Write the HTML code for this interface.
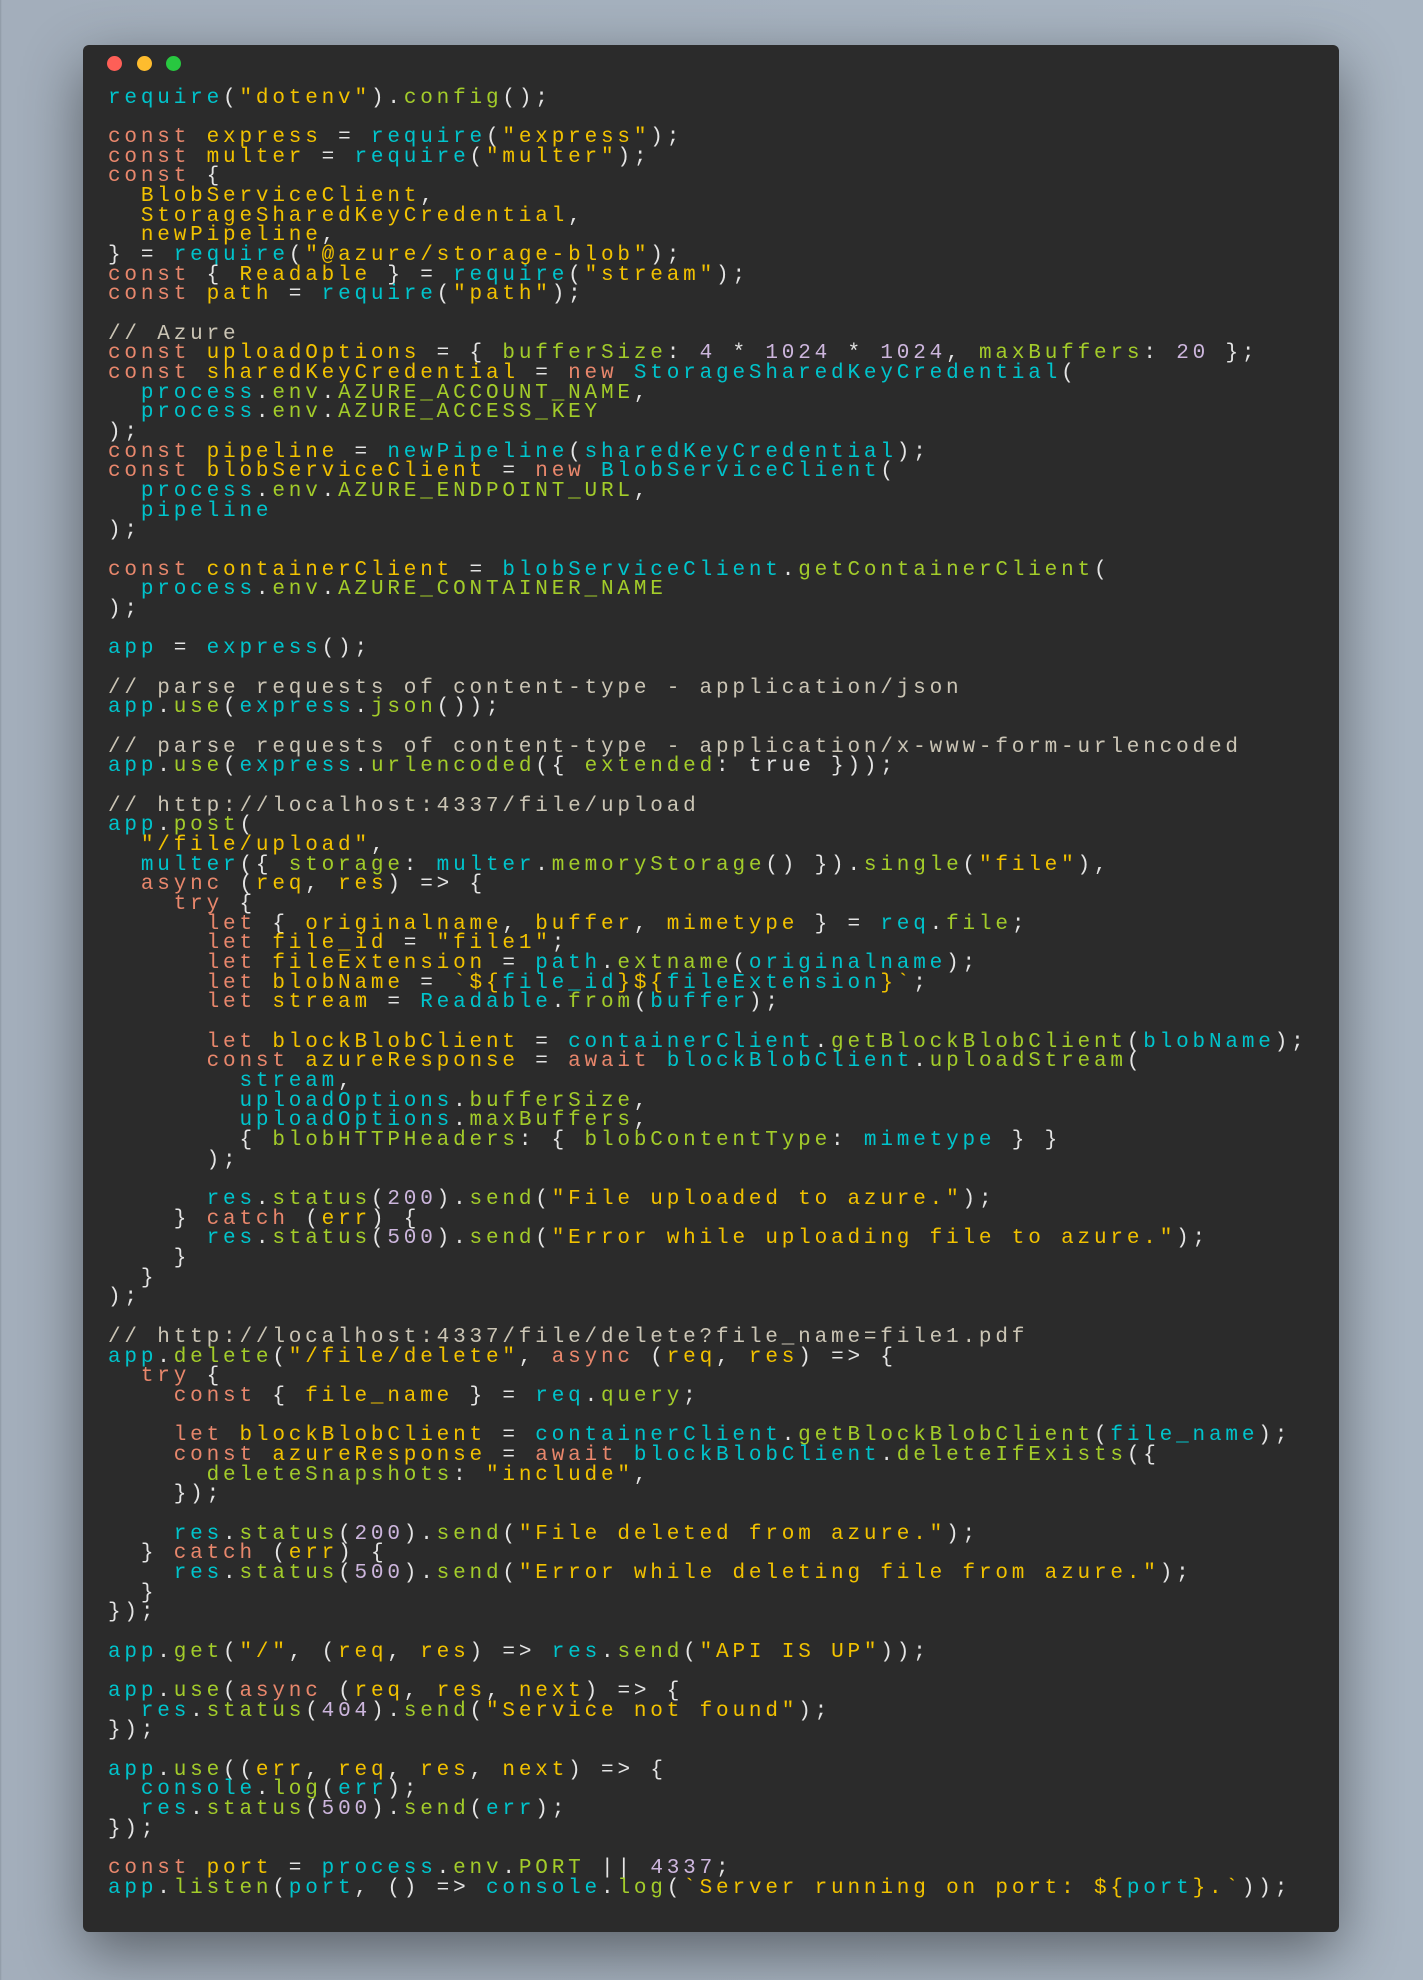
<!DOCTYPE html>
<html><head><meta charset="utf-8"><style>
html,body{margin:0;padding:0;width:1423px;height:1980px;overflow:hidden;background:linear-gradient(90deg,#8e99a4 0px,#a3aebb 2px,#a6b2bf 60%,#a9b5c2 100%);}
.win{position:absolute;left:83px;top:45px;width:1256px;height:1887px;background:#2b2b2b;border-radius:6px;box-shadow:0 20px 60px rgba(0,0,0,.45);}
.d{position:absolute;top:56px;width:15px;height:15px;border-radius:50%;}
pre{position:absolute;left:108px;top:88.5px;margin:0;font-family:"Liberation Mono","DejaVu Sans Mono",monospace;font-size:21px;line-height:19.67px;letter-spacing:3.83px;color:#e4e4e4;}
.k{color:#e8876c}.v{color:#f2c200}.f{color:#00c4cc}.g{color:#a3cc2a}.c{color:#cbc5b5}.n{color:#cdb6dd}
</style></head><body>
<div class="win"></div>
<div class="d" style="left:107px;background:#fe5f57"></div>
<div class="d" style="left:137px;background:#febc2e"></div>
<div class="d" style="left:166px;background:#28c840"></div>
<pre><span class="f">require</span>(<span class="v">"dotenv"</span>).<span class="g">config</span>();

<span class="k">const</span> <span class="v">express</span> = <span class="f">require</span>(<span class="v">"express"</span>);
<span class="k">const</span> <span class="v">multer</span> = <span class="f">require</span>(<span class="v">"multer"</span>);
<span class="k">const</span> {
  <span class="v">BlobServiceClient</span>,
  <span class="v">StorageSharedKeyCredential</span>,
  <span class="v">newPipeline</span>,
} = <span class="f">require</span>(<span class="v">"@azure/storage-blob"</span>);
<span class="k">const</span> { <span class="v">Readable</span> } = <span class="f">require</span>(<span class="v">"stream"</span>);
<span class="k">const</span> <span class="v">path</span> = <span class="f">require</span>(<span class="v">"path"</span>);

<span class="c">// Azure</span>
<span class="k">const</span> <span class="v">uploadOptions</span> = { <span class="g">bufferSize</span>: <span class="n">4</span> * <span class="n">1024</span> * <span class="n">1024</span>, <span class="g">maxBuffers</span>: <span class="n">20</span> };
<span class="k">const</span> <span class="v">sharedKeyCredential</span> = <span class="k">new</span> <span class="f">StorageSharedKeyCredential</span>(
  <span class="f">process</span>.<span class="g">env</span>.<span class="g">AZURE_ACCOUNT_NAME</span>,
  <span class="f">process</span>.<span class="g">env</span>.<span class="g">AZURE_ACCESS_KEY</span>
);
<span class="k">const</span> <span class="v">pipeline</span> = <span class="f">newPipeline</span>(<span class="f">sharedKeyCredential</span>);
<span class="k">const</span> <span class="v">blobServiceClient</span> = <span class="k">new</span> <span class="f">BlobServiceClient</span>(
  <span class="f">process</span>.<span class="g">env</span>.<span class="g">AZURE_ENDPOINT_URL</span>,
  <span class="f">pipeline</span>
);

<span class="k">const</span> <span class="v">containerClient</span> = <span class="f">blobServiceClient</span>.<span class="g">getContainerClient</span>(
  <span class="f">process</span>.<span class="g">env</span>.<span class="g">AZURE_CONTAINER_NAME</span>
);

<span class="f">app</span> = <span class="f">express</span>();

<span class="c">// parse requests of content-type - application/json</span>
<span class="f">app</span>.<span class="g">use</span>(<span class="f">express</span>.<span class="g">json</span>());

<span class="c">// parse requests of content-type - application/x-www-form-urlencoded</span>
<span class="f">app</span>.<span class="g">use</span>(<span class="f">express</span>.<span class="g">urlencoded</span>({ <span class="g">extended</span>: true }));

<span class="c">// http://localhost:4337/file/upload</span>
<span class="f">app</span>.<span class="g">post</span>(
  <span class="v">"/file/upload"</span>,
  <span class="f">multer</span>({ <span class="g">storage</span>: <span class="f">multer</span>.<span class="g">memoryStorage</span>() }).<span class="g">single</span>(<span class="v">"file"</span>),
  <span class="k">async</span> (<span class="v">req</span>, <span class="v">res</span>) =&gt; {
    <span class="k">try</span> {
      <span class="k">let</span> { <span class="v">originalname</span>, <span class="v">buffer</span>, <span class="v">mimetype</span> } = <span class="f">req</span>.<span class="g">file</span>;
      <span class="k">let</span> <span class="v">file_id</span> = <span class="v">"file1"</span>;
      <span class="k">let</span> <span class="v">fileExtension</span> = <span class="f">path</span>.<span class="g">extname</span>(<span class="f">originalname</span>);
      <span class="k">let</span> <span class="v">blobName</span> = <span class="v">`${</span><span class="f">file_id</span><span class="v">}${</span><span class="f">fileExtension</span><span class="v">}`</span>;
      <span class="k">let</span> <span class="v">stream</span> = <span class="f">Readable</span>.<span class="g">from</span>(<span class="f">buffer</span>);

      <span class="k">let</span> <span class="v">blockBlobClient</span> = <span class="f">containerClient</span>.<span class="g">getBlockBlobClient</span>(<span class="f">blobName</span>);
      <span class="k">const</span> <span class="v">azureResponse</span> = <span class="k">await</span> <span class="f">blockBlobClient</span>.<span class="g">uploadStream</span>(
        <span class="f">stream</span>,
        <span class="f">uploadOptions</span>.<span class="g">bufferSize</span>,
        <span class="f">uploadOptions</span>.<span class="g">maxBuffers</span>,
        { <span class="g">blobHTTPHeaders</span>: { <span class="g">blobContentType</span>: <span class="f">mimetype</span> } }
      );

      <span class="f">res</span>.<span class="g">status</span>(<span class="n">200</span>).<span class="g">send</span>(<span class="v">"File uploaded to azure."</span>);
    } <span class="k">catch</span> (<span class="v">err</span>) {
      <span class="f">res</span>.<span class="g">status</span>(<span class="n">500</span>).<span class="g">send</span>(<span class="v">"Error while uploading file to azure."</span>);
    }
  }
);

<span class="c">// http://localhost:4337/file/delete?file_name=file1.pdf</span>
<span class="f">app</span>.<span class="g">delete</span>(<span class="v">"/file/delete"</span>, <span class="k">async</span> (<span class="v">req</span>, <span class="v">res</span>) =&gt; {
  <span class="k">try</span> {
    <span class="k">const</span> { <span class="v">file_name</span> } = <span class="f">req</span>.<span class="g">query</span>;

    <span class="k">let</span> <span class="v">blockBlobClient</span> = <span class="f">containerClient</span>.<span class="g">getBlockBlobClient</span>(<span class="f">file_name</span>);
    <span class="k">const</span> <span class="v">azureResponse</span> = <span class="k">await</span> <span class="f">blockBlobClient</span>.<span class="g">deleteIfExists</span>({
      <span class="g">deleteSnapshots</span>: <span class="v">"include"</span>,
    });

    <span class="f">res</span>.<span class="g">status</span>(<span class="n">200</span>).<span class="g">send</span>(<span class="v">"File deleted from azure."</span>);
  } <span class="k">catch</span> (<span class="v">err</span>) {
    <span class="f">res</span>.<span class="g">status</span>(<span class="n">500</span>).<span class="g">send</span>(<span class="v">"Error while deleting file from azure."</span>);
  }
});

<span class="f">app</span>.<span class="g">get</span>(<span class="v">"/"</span>, (<span class="v">req</span>, <span class="v">res</span>) =&gt; <span class="f">res</span>.<span class="g">send</span>(<span class="v">"API IS UP"</span>));

<span class="f">app</span>.<span class="g">use</span>(<span class="k">async</span> (<span class="v">req</span>, <span class="v">res</span>, <span class="v">next</span>) =&gt; {
  <span class="f">res</span>.<span class="g">status</span>(<span class="n">404</span>).<span class="g">send</span>(<span class="v">"Service not found"</span>);
});

<span class="f">app</span>.<span class="g">use</span>((<span class="v">err</span>, <span class="v">req</span>, <span class="v">res</span>, <span class="v">next</span>) =&gt; {
  <span class="f">console</span>.<span class="g">log</span>(<span class="f">err</span>);
  <span class="f">res</span>.<span class="g">status</span>(<span class="n">500</span>).<span class="g">send</span>(<span class="f">err</span>);
});

<span class="k">const</span> <span class="v">port</span> = <span class="f">process</span>.<span class="g">env</span>.<span class="g">PORT</span> || <span class="n">4337</span>;
<span class="f">app</span>.<span class="g">listen</span>(<span class="f">port</span>, () =&gt; <span class="f">console</span>.<span class="g">log</span>(<span class="v">`Server running on port: ${</span><span class="f">port</span><span class="v">}.`</span>));</pre>
</body></html>
